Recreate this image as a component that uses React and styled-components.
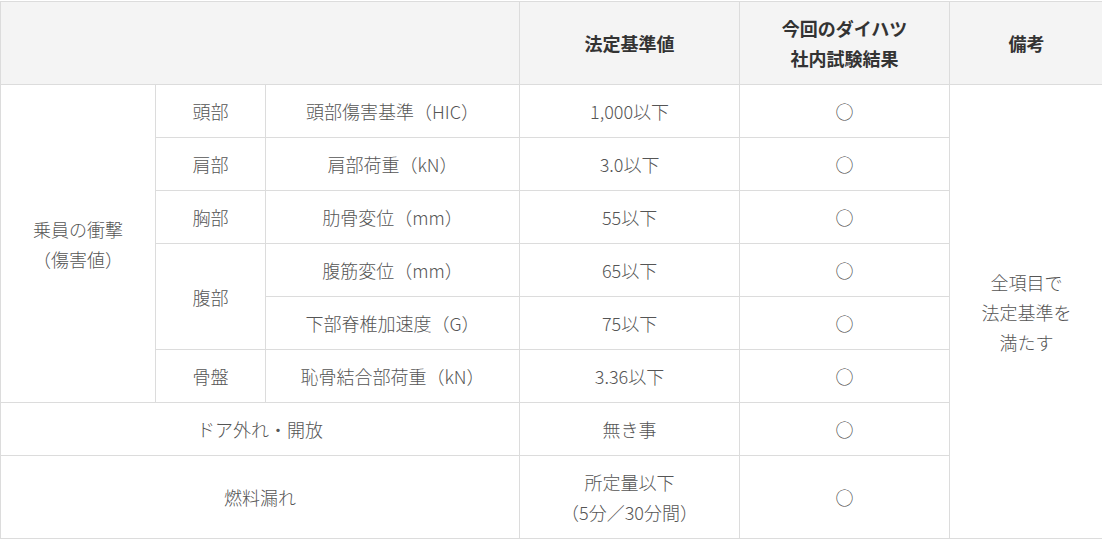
import styled, { createGlobalStyle } from 'styled-components';

const GlobalStyle = createGlobalStyle`
  html, body {
    margin: 0;
    padding: 0;
    background: #fff;
    overflow: hidden;
  }
  body {
    font-family: 'Noto Sans CJK JP', 'Noto Sans', sans-serif;
  }
`;

const Wrapper = styled.div`
  padding-top: 1px;
  width: 1104px;
`;

const Table = styled.table`
  width: 100%;
  border-collapse: collapse;
  table-layout: fixed;
  font-size: 18px;
  line-height: 30px;
`;

const HeadCell = styled.th`
  background: #f4f4f4;
  border: 1px solid #dcdcdc;
  color: #333;
  font-weight: 700;
  text-align: center;
  vertical-align: middle;
  padding: 11px 8px;
`;

const Cell = styled.td`
  border: 1px solid #dcdcdc;
  color: #555;
  font-weight: 300;
  text-align: center;
  vertical-align: middle;
  padding: 11px 8px;
  height: 30px;
`;

const Mark = styled.span`
  font-size: 18px;
  color: #444;
`;

const rows = [
  { part: '頭部', item: '頭部傷害基準（HIC）', value: '1,000以下' },
  { part: '肩部', item: '肩部荷重（kN）', value: '3.0以下' },
  { part: '胸部', item: '肋骨変位（mm）', value: '55以下' },
  { part: '腹部', span: 2, item: '腹筋変位（mm）', value: '65以下' },
  { item: '下部脊椎加速度（G）', value: '75以下' },
  { part: '骨盤', item: '恥骨結合部荷重（kN）', value: '3.36以下' },
];

export default function App() {
  return (
    <Wrapper>
      <GlobalStyle />
      <Table>
        <colgroup>
          <col style={{ width: 155 }} />
          <col style={{ width: 110 }} />
          <col style={{ width: 254 }} />
          <col style={{ width: 220 }} />
          <col style={{ width: 210 }} />
          <col />
        </colgroup>
        <thead>
          <tr>
            <HeadCell colSpan={3}></HeadCell>
            <HeadCell>法定基準値</HeadCell>
            <HeadCell>
              今回のダイハツ
              <br />
              社内試験結果
            </HeadCell>
            <HeadCell>備考</HeadCell>
          </tr>
        </thead>
        <tbody>
          {rows.map((row, i) => (
            <tr key={row.item}>
              {i === 0 && (
                <Cell rowSpan={rows.length}>
                  乗員の衝撃
                  <br />
                  （傷害値）
                </Cell>
              )}
              {row.part && <Cell rowSpan={row.span || 1}>{row.part}</Cell>}
              <Cell>{row.item}</Cell>
              <Cell>{row.value}</Cell>
              <Cell>
                <Mark>○</Mark>
              </Cell>
              {i === 0 && (
                <Cell rowSpan={rows.length + 2}>
                  全項目で
                  <br />
                  法定基準を
                  <br />
                  満たす
                </Cell>
              )}
            </tr>
          ))}
          <tr>
            <Cell colSpan={3}>ドア外れ・開放</Cell>
            <Cell>無き事</Cell>
            <Cell>
              <Mark>○</Mark>
            </Cell>
          </tr>
          <tr>
            <Cell colSpan={3}>燃料漏れ</Cell>
            <Cell>
              所定量以下
              <br />
              （5分／30分間）
            </Cell>
            <Cell>
              <Mark>○</Mark>
            </Cell>
          </tr>
        </tbody>
      </Table>
    </Wrapper>
  );
}
